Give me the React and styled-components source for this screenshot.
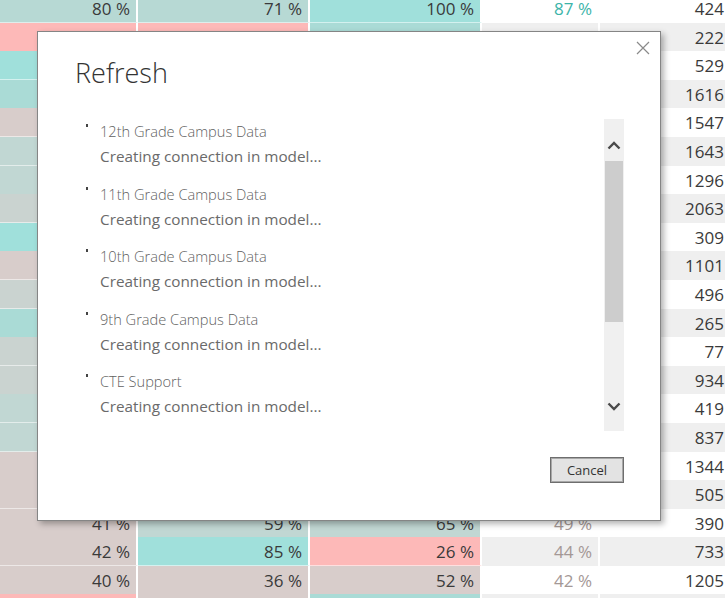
import React from "react";
import styled, { createGlobalStyle } from "styled-components";

const GlobalStyle = createGlobalStyle`
  html, body {
    margin: 0;
    padding: 0;
    background: #ffffff;
    overflow: hidden;
  }
  body {
    font-family: "Open Sans", "Liberation Sans", sans-serif;
    color: #333333;
  }
`;

const palette = {
  c: "#a0e0db",
  t: "#aadbd6",
  t2: "#b7d9d4",
  g: "#c1d7d3",
  n: "#cad3d0",
  p: "#d8cdcb",
  r: "#fdb9b8",
};

const rows = [
  { a: ["80 %", "t2"], b: ["71 %", "t2"], c: ["100 %", "c"], d: ["87 %", true], e: 424 },
  { a: ["23 %", "r"], b: ["31 %", "r"], c: ["78 %", "t"], d: ["45 %"], e: 222 },
  { a: ["96 %", "c"], b: ["58 %", "g"], c: ["64 %", "g"], d: ["69 %"], e: 529 },
  { a: ["89 %", "t"], b: ["62 %", "g"], c: ["71 %", "t2"], d: ["67 %"], e: 1616 },
  { a: ["47 %", "p"], b: ["55 %", "n"], c: ["60 %", "g"], d: ["52 %"], e: 1547 },
  { a: ["62 %", "g"], b: ["66 %", "g"], c: ["58 %", "g"], d: ["57 %"], e: 1643 },
  { a: ["64 %", "g"], b: ["49 %", "p"], c: ["70 %", "t2"], d: ["59 %"], e: 1296 },
  { a: ["55 %", "n"], b: ["61 %", "g"], c: ["52 %", "p"], d: ["54 %"], e: 2063 },
  { a: ["94 %", "c"], b: ["88 %", "t"], c: ["91 %", "c"], d: ["83 %", true], e: 309 },
  { a: ["44 %", "p"], b: ["52 %", "n"], c: ["47 %", "p"], d: ["48 %"], e: 1101 },
  { a: ["58 %", "n"], b: ["57 %", "n"], c: ["63 %", "g"], d: ["55 %"], e: 496 },
  { a: ["84 %", "t"], b: ["76 %", "t2"], c: ["80 %", "t"], d: ["72 %"], e: 265 },
  { a: ["53 %", "n"], b: ["45 %", "p"], c: ["59 %", "g"], d: ["51 %"], e: 77 },
  { a: ["56 %", "n"], b: ["60 %", "g"], c: ["54 %", "n"], d: ["53 %"], e: 934 },
  { a: ["61 %", "g"], b: ["50 %", "p"], c: ["62 %", "g"], d: ["56 %"], e: 419 },
  { a: ["60 %", "g"], b: ["63 %", "g"], c: ["57 %", "n"], d: ["58 %"], e: 837 },
  { a: ["46 %", "p"], b: ["54 %", "n"], c: ["48 %", "p"], d: ["47 %"], e: 1344 },
  { a: ["45 %", "p"], b: ["41 %", "p"], c: ["50 %", "p"], d: ["46 %"], e: 505 },
  { a: ["41 %", "p"], b: ["59 %", "g"], c: ["65 %", "g"], d: ["49 %"], e: 390 },
  { a: ["42 %", "p"], b: ["85 %", "c"], c: ["26 %", "r"], d: ["44 %"], e: 733 },
  { a: ["40 %", "p"], b: ["36 %", "p"], c: ["52 %", "p"], d: ["42 %"], e: 1205 },
  { a: ["21 %", "r"], b: ["43 %", "p"], c: ["88 %", "t"], d: ["61 %"], e: 1190 },
];

const sources = [
  "12th Grade Campus Data",
  "11th Grade Campus Data",
  "10th Grade Campus Data",
  "9th Grade Campus Data",
  "CTE Support",
];

const Page = styled.div`
  position: relative;
  width: 725px;
  height: 598px;
  overflow: hidden;
`;

const Table = styled.div`
  display: flex;
  flex-direction: column;
  margin-top: -6px;
`;

const Row = styled.div`
  display: grid;
  grid-template-columns: 138px 172px 172px 118px 125px;
  height: 28.6px;
`;

const ColorCell = styled.div`
  background: ${(p) => palette[p.$tone]};
  border-right: 2px solid #ffffff;
  border-bottom: 1px solid rgba(255, 255, 255, 0.55);
  font-size: 17px;
  color: #3a3a3a;
  text-align: right;
  padding: 2px 6px 0 0;
  line-height: 26px;
  white-space: nowrap;
  box-sizing: border-box;
`;

const StripeCell = styled.div`
  background: ${(p) => (p.$odd ? "#efefef" : "#ffffff")};
  border-right: ${(p) => (p.$divider ? "2px solid #ffffff" : "none")};
  font-size: 17px;
  color: ${(p) => (p.$good ? "#3cb4a9" : p.$muted ? "#a49896" : "#3a3a3a")};
  text-align: right;
  padding: 2px ${(p) => p.$pad}px 0 0;
  line-height: 26px;
  white-space: nowrap;
  box-sizing: border-box;
`;

const Dialog = styled.div`
  position: absolute;
  left: 37px;
  top: 31px;
  width: 624px;
  height: 490px;
  box-sizing: border-box;
  background: #ffffff;
  border: 1px solid #858585;
  box-shadow: 3px 3px 6px rgba(0, 0, 0, 0.3);
  padding: 23px 36px 0 36px;
  display: flex;
  flex-direction: column;
`;

const CloseButton = styled.div`
  position: absolute;
  top: 9px;
  right: 10px;
  width: 14px;
  height: 14px;
  display: flex;
`;

const Title = styled.h1`
  margin: 0;
  font-size: 27px;
  font-weight: 300;
  line-height: 36px;
  color: #333333;
  padding-left: 1px;
`;

const Body = styled.div`
  display: flex;
  height: 312px;
  margin-top: 28px;
`;

const List = styled.ul`
  flex: 1;
  list-style: none;
  margin: 0;
  padding: 0 0 0 12px;
`;

const Item = styled.li`
  display: flex;
  height: 62.5px;
`;

const Bullet = styled.span`
  width: 2px;
  height: 3px;
  margin-top: 5px;
  margin-right: 12px;
  background: #444444;
  flex-shrink: 0;
`;

const ItemText = styled.div`
  display: flex;
  flex-direction: column;
`;

const SourceName = styled.span`
  font-size: 14.6px;
  font-weight: 300;
  line-height: 25px;
  color: #5f5f5f;
`;

const Status = styled.span`
  font-size: 15.3px;
  line-height: 25px;
  color: #6a6a6a;
`;

const Scrollbar = styled.div`
  width: 20px;
  background: #f0f0f0;
  display: flex;
  flex-direction: column;
  align-items: center;
`;

const ArrowBox = styled.div`
  height: ${(p) => p.$h}px;
  flex: ${(p) => (p.$grow ? 1 : "none")};
  display: flex;
  flex-direction: column;
  justify-content: ${(p) => (p.$grow ? "flex-end" : "flex-start")};
  padding: ${(p) => (p.$grow ? "0 0 20px 0" : "22px 0 0 0")};
  box-sizing: border-box;
`;

const Thumb = styled.div`
  width: 18px;
  height: 161px;
  background: #cdcdcd;
`;

const Footer = styled.div`
  display: flex;
  justify-content: flex-end;
  margin-top: 26px;
`;

const Button = styled.button`
  width: 74px;
  height: 26px;
  background: #e3e3e3;
  border: 1px solid #6e6e6e;
  box-shadow: inset 0 0 0 1px #a8a8a8;
  font-family: "Open Sans", "Liberation Sans", sans-serif;
  font-size: 13px;
  color: #333333;
  padding: 0;
`;

const Chevron = ({ up }) => (
  <svg width="14" height="9" viewBox="0 0 14 9">
    <path
      d={up ? "M1.5 7.5 L7 2 L12.5 7.5" : "M1.5 1.5 L7 7 L12.5 1.5"}
      fill="none"
      stroke="#4a4a4a"
      strokeWidth="2.4"
    />
  </svg>
);

export default function App() {
  return (
    <Page>
      <GlobalStyle />
      <Table>
        {rows.map((r, i) => (
          <Row key={i}>
            <ColorCell $tone={r.a[1]}>{r.a[0]}</ColorCell>
            <ColorCell $tone={r.b[1]}>{r.b[0]}</ColorCell>
            <ColorCell $tone={r.c[1]}>{r.c[0]}</ColorCell>
            <StripeCell $odd={i % 2 === 1} $divider $pad={6} $good={r.d[1]} $muted={!r.d[1]}>
              {r.d[0]}
            </StripeCell>
            <StripeCell $odd={i % 2 === 1} $pad={1}>
              {r.e}
            </StripeCell>
          </Row>
        ))}
      </Table>

      <Dialog>
        <CloseButton>
          <svg width="14" height="14" viewBox="0 0 14 14">
            <path d="M1 1 L13 13 M13 1 L1 13" stroke="#8a8a8a" strokeWidth="1.2" />
          </svg>
        </CloseButton>
        <Title>Refresh</Title>
        <Body>
          <List>
            {sources.map((s) => (
              <Item key={s}>
                <Bullet />
                <ItemText>
                  <SourceName>{s}</SourceName>
                  <Status>Creating connection in model...</Status>
                </ItemText>
              </Item>
            ))}
          </List>
          <Scrollbar>
            <ArrowBox $h={42}>
              <Chevron up />
            </ArrowBox>
            <Thumb />
            <ArrowBox $grow>
              <Chevron />
            </ArrowBox>
          </Scrollbar>
        </Body>
        <Footer>
          <Button>Cancel</Button>
        </Footer>
      </Dialog>
    </Page>
  );
}
